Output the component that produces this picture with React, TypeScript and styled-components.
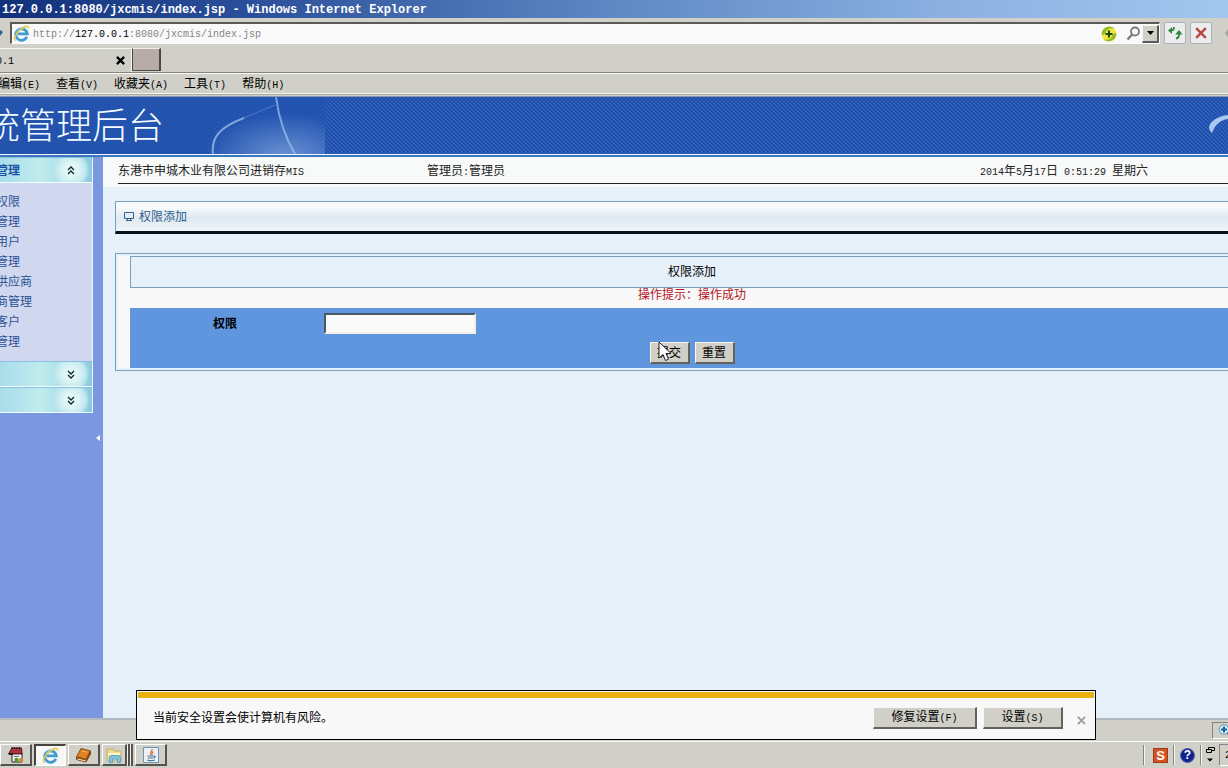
import React from "react";
import styled, { createGlobalStyle } from "styled-components";

const face = "#d1d0c8";
const line = "#7c9fbd";

const GlobalStyle = createGlobalStyle`
  * { box-sizing: border-box; }
  body {
    margin: 0;
    overflow: hidden;
    background: ${face};
    color: #000;
    font: 12px/16px "Liberation Sans", "Noto Sans CJK SC", sans-serif;
  }
  button, input { font: inherit; color: inherit; }
  svg { display: block; flex: none; }
`;

const Screen = styled.div`
  position: relative;
  display: flex;
  flex-direction: column;
  min-height: 100vh;
  overflow: hidden;
`;

/* Half-width characters of the fixed-pitch interface font */
const Latin = styled.span<{ $tone?: string }>`
  font-family: "Liberation Mono", monospace;
  font-size: 10px;
  white-space: pre;
  color: ${(p) => p.$tone ?? "inherit"};
`;

/* ---------- browser chrome ---------- */

const TitleBar = styled.header`
  height: 18px;
  padding-left: 2px;
  background: linear-gradient(90deg, #12307a 0%, #2a4f9a 20%, #5f88c4 50%, #8db2e2 78%, #a3c6ee 100%);
  color: #fff;
  font: bold 12px/20px "Liberation Mono", monospace;
  white-space: nowrap;
`;

const AddressRow = styled.div`
  display: flex;
  align-items: center;
  gap: 4px;
  height: 30px;
  background: ${face};
  overflow: hidden;
`;

const NavTip = styled.div`
  width: 6px;
`;

const AddressField = styled.div`
  flex: 1;
  display: flex;
  align-items: center;
  height: 22px;
  padding-left: 1px;
  border: 1px solid #fff;
  border-top: 2px solid #5c5a58;
  border-left: 2px solid #5c5a58;
  background: #f9f9f9;
`;

const Url = styled.div`
  flex: 1;
  padding-left: 3px;
  line-height: 16px;
`;

const FieldIcons = styled.div`
  display: flex;
  align-items: center;
  gap: 9px;
`;

const DropButton = styled.button`
  display: grid;
  place-items: center;
  width: 17px;
  height: 18px;
  margin-left: -8px;
  padding: 0;
  border: 1px solid #f4f4f0;
  border-right: 2px solid #5c5a58;
  border-bottom: 2px solid #5c5a58;
  background: ${face};
`;

const ToolButton = styled.button`
  display: grid;
  place-items: center;
  width: 22px;
  height: 22px;
  padding: 0;
  border: 1px solid #a9b2bd;
  border-radius: 2px;
  background: #ecedee;
`;

const TabRow = styled.div`
  display: flex;
  height: 25px;
  border-bottom: 1px solid #85847e;
  background: ${face};
`;

const Tab = styled.div`
  display: flex;
  align-items: center;
  justify-content: space-between;
  width: 132px;
  height: 24px;
  padding-right: 6px;
  border-top: 1px solid #f6f6f2;
  border-right: 1px solid #f6f6f2;
`;

const TabLabel = styled.span`
  margin-left: -4px;
`;

const IconButton = styled.button`
  display: grid;
  place-items: center;
  width: 10px;
  height: 10px;
  padding: 0;
  border: 0;
  background: none;
`;

const NewTab = styled.button`
  width: 29px;
  height: 23px;
  border: 1px solid #4a4846;
  border-top-color: #f0eeea;
  border-right-width: 2px;
  background: #b8aca8;
`;

const MenuBar = styled.nav`
  display: flex;
  align-items: center;
  gap: 16px;
  height: 24px;
  margin-left: -2px;
  padding-bottom: 1px;
  border-top: 1px solid #fbfbf8;
  border-bottom: 1px solid #8a98ad;
  background: linear-gradient(${face} 19px, #f4f4f0 19px 20px, #aaa9a4 20px 21px, ${face} 21px);
`;

const MenuButton = styled.button`
  padding: 0;
  border: 0;
  background: none;
  white-space: nowrap;
`;

/* ---------- page ---------- */

const Banner = styled.div`
  display: flex;
  align-items: center;
  justify-content: space-between;
  height: 60px;
  border-bottom: 2px solid #3a77bd;
  box-shadow: inset 0 -1px 0 #f1f8ff;
  background: linear-gradient(45deg, #1e4fae 25%, #2f5fb7 25% 50%, #1e4fae 50% 75%, #2f5fb7 75%) 0 0 / 4px 4px;
`;

const BannerArt = styled.div`
  position: relative;
  width: 325px;
  height: 57px;
  margin-bottom: 1px;
  overflow: hidden;
  background: radial-gradient(ellipse 80px 44px at 285px 60px, #8fb2e5aa, transparent),
    linear-gradient(90deg, #2252abcc 0%, #1d4fae66 100%);
`;

const BannerLines = styled.svg`
  position: absolute;
  right: 0;
  top: 0;
`;

const BannerTitle = styled.h1`
  margin: 0 0 0 -16px;
  color: #f2fbff;
  font: 300 36px/52px "Noto Sans CJK SC", sans-serif;
  white-space: nowrap;
`;

const Body = styled.div`
  flex: 1;
  display: flex;
  overflow: hidden;
`;

const Sidebar = styled.aside`
  display: flex;
  width: 103px;
  flex: none;
  background: #7a97df;
`;

const Groups = styled.div`
  flex: 1;
`;

const GroupHead = styled.button`
  display: flex;
  align-items: center;
  justify-content: space-between;
  width: 100%;
  height: 26px;
  padding: 1px 17px 0 0;
  border: 0;
  border-right: 1px solid #e3fafa;
  border-bottom: 1px solid #f0ffff;
  border-top: 1px solid #8bbde0;
  background: radial-gradient(circle at 71px 12px, #e2f8f4 0 6px, #c4eaf0 14px, transparent 19px),
    linear-gradient(90deg, #a9dcec, #c0ecec 45%, #a4dcea 70%, #8cc8e0);
  color: #1c50a0;
  font-weight: bold;
`;

const GroupName = styled.span`
  margin-left: -4px;
`;

const LinkList = styled.ul`
  margin: 0;
  padding: 9px 0;
  list-style: none;
  border-right: 1px solid #f2f4fc;
  background: #d0d7ef;
`;

const LinkItem = styled.li`
  height: 20px;
  margin-left: -4px;
  line-height: 20px;
`;

const SideLink = styled.a`
  color: #2a5293;
  text-decoration: none;
`;

const Splitter = styled.div`
  display: flex;
  align-items: center;
  justify-content: center;
  width: 10px;
`;

const Main = styled.main`
  flex: 1;
  min-width: 0;
  background: #e6f0f8;
`;

const InfoBar = styled.div`
  height: 30px;
  padding-left: 15px;
  background: #f8f9f9;
`;

const InfoLine = styled.div`
  display: grid;
  grid-template-columns: 309px 1fr 248px;
  height: 27px;
  border-bottom: 1px solid #222;
  line-height: 28px;
  color: #222;
`;

const Heading = styled.h2`
  display: flex;
  align-items: center;
  gap: 5px;
  height: 33px;
  margin: 14px 0 0 12px;
  padding: 1px 0 0 8px;
  border: 1px solid ${line};
  border-right: 0;
  border-bottom: 3px solid #06121f;
  background: linear-gradient(#f5f9fb 0 20%, #dfe9f1 55%, #f0f5f9 100%);
  color: #315f8c;
  font-size: 12px;
  font-weight: normal;
`;

/* The form is wider than the window and runs off its right edge */
const Panel = styled.section`
  margin: 19px -41px 0 12px;
  padding: 2px;
  border: 1px solid ${line};
`;

const PanelInner = styled.div`
  padding: 0 12px;
  background: #f8f8f8;
`;

const PanelTitle = styled.h3`
  height: 32px;
  margin: 0;
  border: 1px solid ${line};
  background: #e6f0f8;
  font-size: 12px;
  font-weight: normal;
  line-height: 30px;
  text-align: center;
`;

const Message = styled.p`
  height: 20px;
  margin: 0;
  color: #b3161c;
  line-height: 14px;
  text-align: center;
`;

const Form = styled.form`
  height: 60px;
  padding-top: 5px;
  background: #6096dd;
`;

const Field = styled.div`
  display: grid;
  grid-template-columns: 190px 1fr;
  align-items: center;
  column-gap: 4px;
`;

const Label = styled.label`
  font-weight: bold;
  text-align: center;
`;

const TextInput = styled.input`
  width: 152px;
  height: 21px;
  padding: 0 4px;
  border: 2px solid #efefe8;
  border-top-color: #4d5866;
  border-left-color: #4d5866;
  background: #f9f9f9;
`;

const Actions = styled.div`
  display: flex;
  justify-content: center;
  gap: 5px;
  margin-top: 8px;
`;

const PushButton = styled.button<{ $width: number }>`
  position: relative;
  width: ${(p) => p.$width}px;
  height: 22px;
  padding: 0;
  border: 1px solid #f7f7f3;
  border-right: 2px solid #65625c;
  border-bottom: 2px solid #65625c;
  background: ${face};
  line-height: 18px;
  white-space: nowrap;
`;

const Pointer = styled.svg`
  position: absolute;
  left: 7px;
  top: -2px;
`;

/* ---------- bottom of the window ---------- */

const StatusBar = styled.footer`
  display: flex;
  justify-content: flex-end;
  height: 23px;
  padding-top: 2px;
  border-top: 2px solid #b3b9be;
  background: ${face};
`;

const ZoomBox = styled.div`
  width: 16px;
  height: 17px;
  padding: 1px 0 0 5px;
  border: 1px solid #85847e;
  border-right: 0;
  border-bottom-color: #fff;
  overflow: hidden;
`;

const Notice = styled.div`
  position: absolute;
  left: 136px;
  right: 132px;
  bottom: 28px;
  height: 50px;
  padding: 1px;
  border: 1px solid #000;
  background: #f8f8f8;
`;

const NoticeStripe = styled.div`
  height: 6px;
  background: #e9b012;
`;

const NoticeBody = styled.div`
  display: flex;
  align-items: center;
  gap: 6px;
  height: 40px;
  padding: 0 8px 0 15px;
`;

const NoticeText = styled.p`
  flex: 1;
  margin: 0;
`;

const NoticeClose = styled(IconButton)`
  margin: 4px 0 0 7px;
`;

const Taskbar = styled.div`
  display: flex;
  align-items: center;
  justify-content: space-between;
  height: 27px;
  border-top: 1px solid #fbfbf8;
  background: ${face};
`;

const Tasks = styled.div`
  display: flex;
  gap: 2px;
`;

const Task = styled.button<{ $active?: boolean }>`
  display: grid;
  place-items: center;
  width: 32px;
  height: 22px;
  padding: 0;
  border: 1px solid #fff;
  border-right: 2px solid #55534f;
  border-bottom: 2px solid #55534f;
  background: ${face};
  ${(p) =>
    p.$active &&
    `border: 2px solid #45433f;
     border-right: 1px solid #fff;
     border-bottom: 1px solid #fff;
     background: #f7f7f7;`}
`;

const Stack = styled.div`
  display: flex;
`;

const StackEdge = styled.span`
  width: 3px;
  height: 22px;
  border-right: 2px solid #55534f;
  background: #f2f2ee;
`;

const StackTask = styled(Task)`
  width: 25px;
`;

const Tray = styled.div`
  display: flex;
  align-items: center;
  height: 22px;
`;

const TrayLine = styled.span<{ $gap: number }>`
  width: 2px;
  height: 20px;
  margin-right: ${(p) => p.$gap}px;
  border-left: 1px solid #85847e;
  border-right: 1px solid #f6f6f2;
`;

const InputBadge = styled.span`
  width: 15px;
  height: 15px;
  margin-right: 5px;
  border: 1px solid #a33a16;
  background: #d4531f;
  color: #fff;
  font: bold 13px/13px "Liberation Sans", sans-serif;
  text-align: center;
`;

const HelpBadge = styled.span`
  width: 15px;
  height: 15px;
  margin-right: 5px;
  border-radius: 50%;
  border: 1px solid #5068b0;
  background: #10238c;
  color: #fff;
  font: bold 12px/13px "Liberation Sans", sans-serif;
  text-align: center;
`;

const Clock = styled.span`
  width: 9px;
  height: 22px;
  margin-left: 3px;
  padding-left: 5px;
  border: 1px solid #85847e;
  border-right: 0;
  border-bottom-color: #fff;
  overflow: hidden;
  line-height: 19px;
`;

/* ---------- drawings ---------- */

const BrowserIcon = () => (
  <svg width="17" height="17" viewBox="0 0 16 16" fill="none">
    <path d="M13 11.200A5.400 5.400 0 1 1 13.400 8.400H4.400" stroke="#3f9bd3" strokeWidth="2.700" />
    <path d="M4 6.500A4.700 4.700 0 0 1 10 3.600" stroke="#9bd7f2" strokeWidth="1" />
    <path d="M2.600 14.600C-.3 14 2.500 7.600 7.500 3.800c3.800-2.900 7.500-3.600 7.300-.5" stroke="#e3c84f" strokeWidth="1.500" />
  </svg>
);

const AddIcon = () => (
  <svg width="16" height="16" viewBox="0 0 16 16">
    <circle cx="8" cy="8" r="7.500" fill="#f1e33c" />
    <path d="M1 9C-.5 2 9-1.500 13.500 2.500 9 1.500 5 3.500 4.500 7.500zM15 7c1.500 7-7.500 10.500-12.500 6.500 5 1 9-1 9-5z" fill="#8dbb2a" />
    <path d="M8 4.500v7M4.500 8h7" stroke="#174b16" strokeWidth="2" />
  </svg>
);

const SearchIcon = () => (
  <svg width="15" height="15" viewBox="0 0 15 15" fill="none" stroke="#77777a" strokeWidth="1.800">
    <circle cx="9" cy="5.500" r="4" />
    <path d="M6.200 8.500L1.500 13.500" strokeWidth="2.200" />
  </svg>
);

const DownTriangle = () => (
  <svg width="7" height="4" viewBox="0 0 7 4">
    <path d="M0 0h7L3.500 4z" fill="#000" />
  </svg>
);

const RefreshIcon = () => (
  <svg width="16" height="14" viewBox="0 0 16 14" fill="none" stroke="#2f8a40" strokeWidth="1.800">
    <path d="M4 4h1.500q1.500 0 1.500-3" />
    <path d="M1 4.500L5 1v7z" fill="#2f8a40" stroke="none" />
    <path d="M12 7v2q0 3-3 3.500" />
    <path d="M8.200 8.500L12 4l3.600 4.500z" fill="#2f8a40" stroke="none" />
  </svg>
);

const Cross = ({ size, color, weight }: { size: number; color: string; weight: number }) => (
  <svg width={size} height={size} viewBox="0 0 10 10">
    <path d="M1 1l8 8M9 1l-8 8" stroke={color} strokeWidth={weight} />
  </svg>
);

const Chevrons = ({ up }: { up?: boolean }) => (
  <svg width="8" height="9" viewBox="0 0 8 9" fill="none" stroke="#123" strokeWidth="1.300">
    <path d={up ? "M1 4l3-3 3 3M1 8l3-3 3 3" : "M1 1l3 3 3-3M1 5l3 3 3-3"} />
  </svg>
);

const MonitorIcon = () => (
  <svg width="10" height="10" viewBox="0 0 10 10" fill="none" stroke="#315f8c">
    <path d="M.5 .5h9v6h-9zM3.500 6.500v2M6.500 6.500v2M2 8.500h6" />
  </svg>
);

const PointerArrow = () => (
  <Pointer width="14" height="21" viewBox="0 0 14 21">
    <path d="M1 1v16l4-3.500 2.500 6 3-1.200L8 12.500h5z" fill="#fff" stroke="#222" />
  </Pointer>
);

const NotebookIcon = () => (
  <svg width="18" height="17" viewBox="0 0 18 17">
    <path d="M5 7h10v9H5z" fill="#f7f4ec" stroke="#222" />
    <path d="M5 2h9.500l.5 6H1.500z" fill="#a8323f" stroke="#45131b" />
    <path d="M5 1v2M7.500 1v2M10 1v2M12.500 1v2" stroke="#222" />
    <path d="M2 8h4" stroke="#222" strokeWidth="2" />
    <circle cx="9.500" cy="14" r="2.200" fill="#4c9a35" />
    <circle cx="14" cy="14" r="2.200" fill="#c98f2c" />
    <path d="M7 10.500h5" stroke="#667" />
  </svg>
);

const BookIcon = () => (
  <svg width="17" height="16" viewBox="0 0 17 16">
    <path d="M6 1.500l9.500 2.500-4.500 8.500L1.500 10z" fill="#d98322" stroke="#8a4a10" />
    <path d="M1.500 10v2.500l9.500 2.500 4.500-8V4L11 12.500z" fill="#a85c14" stroke="#7c430f" />
    <path d="M2.500 12l8.300 2" stroke="#f3e3c0" />
    <path d="M7 4l5 1.300" stroke="#f3b765" />
  </svg>
);

const FolderIcon = () => (
  <svg width="17" height="16" viewBox="0 0 17 16">
    <path d="M1 2h6l1 2h7v10H1z" fill="#ecdc8c" stroke="#c2b068" />
    <path d="M2 6h12v2H2z" fill="#fff6c6" />
    <path d="M3.500 15.500V11q0-2.500 2.500-2.500h6q2.500 0 2.500 2.500v4.500h-3V12h-5v3.500z" fill="#7cc4e4" stroke="#5aa3c6" />
  </svg>
);

const JavaIcon = () => (
  <svg width="16" height="16" viewBox="0 0 16 16" fill="none">
    <path d="M.5 .5h15v15H.5z" fill="#edf1f4" stroke="#6e92b3" />
    <path d="M9 2c1 2-3 3-1 6M10.500 4.500C8 6 9.500 6.500 9 8" stroke="#dc6a2c" strokeWidth="1.200" />
    <path d="M4.500 9h6.500M5 11h5.500M11 9q2.500 0 0 2M4 13q4 1.200 8 0" stroke="#45759c" strokeWidth="1.200" />
  </svg>
);

const ZoomIcon = () => (
  <svg width="16" height="14" viewBox="0 0 16 14">
    <circle cx="6" cy="5.500" r="4.800" fill="#d9edf8" stroke="#5c95bd" />
    <path d="M6 2.500v6M3 5.500h6" stroke="#1763a0" strokeWidth="2" />
    <path d="M9.500 9l4 4" stroke="#80624a" strokeWidth="2" />
  </svg>
);

const RestoreIcon = () => (
  <svg width="11" height="18" viewBox="0 0 11 18">
    <path d="M3.500 4V1.500h6v3H7M1.500 3.500h5v3h-5z" fill="none" stroke="#000" />
    <path d="M2 12.500h6l-3 3z" fill="#000" />
  </svg>
);

const menus = [
  ["编辑", "(E)"],
  ["查看", "(V)"],
  ["收藏夹", "(A)"],
  ["工具", "(T)"],
  ["帮助", "(H)"],
];

const links = ["权限", "管理", "用户", "管理", "供应商", "商管理", "客户", "管理"];

export default function App() {
  return (
    <Screen>
      <GlobalStyle />
      <TitleBar>127.0.0.1:8080/jxcmis/index.jsp - Windows Internet Explorer</TitleBar>
      <AddressRow>
        <NavTip>
          <svg width="4" height="8" viewBox="0 0 4 8">
            <path d="M0 1l3 2-3 4z" fill="#2c5f98" />
          </svg>
        </NavTip>
        <AddressField>
          <BrowserIcon />
          <Url>
            <Latin $tone="#858585">http://</Latin>
            <Latin>127.0.0.1</Latin>
            <Latin $tone="#858585">:8080/jxcmis/index.jsp</Latin>
          </Url>
          <FieldIcons>
            <AddIcon />
            <SearchIcon />
            <DropButton aria-label="搜索选项">
              <DownTriangle />
            </DropButton>
          </FieldIcons>
        </AddressField>
        <ToolButton aria-label="刷新">
          <RefreshIcon />
        </ToolButton>
        <ToolButton aria-label="停止">
          <Cross size={12} color="#b5483f" weight={2} />
        </ToolButton>
        <svg width="12" height="10" viewBox="0 0 12 10">
          <path d="M12 1L9 5l3 4z" fill="#a5a5a2" />
        </svg>
      </AddressRow>
      <TabRow>
        <Tab>
          <TabLabel>
            <Latin>0.1</Latin>
          </TabLabel>
          <IconButton aria-label="关闭选项卡">
            <Cross size={9} color="#000" weight={2.5} />
          </IconButton>
        </Tab>
        <NewTab aria-label="新选项卡" />
      </TabRow>
      <MenuBar>
        {menus.map(([name, key]) => (
          <MenuButton key={name}>
            {name}
            <Latin>{key}</Latin>
          </MenuButton>
        ))}
      </MenuBar>

      <Banner>
        <BannerArt>
          <BannerTitle>统管理后台</BannerTitle>
          <BannerLines width="125" height="57" viewBox="0 0 125 57" fill="none">
            <path d="M13 57C11 40 20 30 44 21" stroke="#a9c6f0" strokeWidth="2" strokeOpacity=".7" />
            <path d="M44 21C54 17 64 12 75 8" stroke="#8fb2e6" strokeWidth="1" strokeOpacity=".4" />
            <path d="M76 0C79 22 86 42 95 57" stroke="#9fc0ee" strokeWidth="2" strokeOpacity=".7" />
          </BannerLines>
        </BannerArt>
        <svg width="20" height="24" viewBox="0 0 20 24">
          <path d="M1 13C3 6 11 2 20 1v4C12 6 7 11 4 19 2 17 1 15 1 13z" fill="#a9c8f2" />
        </svg>
      </Banner>

      <Body>
        <Sidebar>
          <Groups>
            <GroupHead>
              <GroupName>管理</GroupName>
              <Chevrons up />
            </GroupHead>
            <LinkList>
              {links.map((text, i) => (
                <LinkItem key={i}>
                  <SideLink href="#">{text}</SideLink>
                </LinkItem>
              ))}
            </LinkList>
            <GroupHead aria-label="展开">
              <GroupName />
              <Chevrons />
            </GroupHead>
            <GroupHead aria-label="展开">
              <GroupName />
              <Chevrons />
            </GroupHead>
          </Groups>
          <Splitter>
            <svg width="4" height="6" viewBox="0 0 4 6">
              <path d="M4 0v6L0 3z" fill="#fff" />
            </svg>
          </Splitter>
        </Sidebar>
        <Main>
          <InfoBar>
            <InfoLine>
              <span>
                东港市申城木业有限公司进销存<Latin>MIS</Latin>
              </span>
              <span>
                管理员<Latin>:</Latin>管理员
              </span>
              <span>
                <Latin>2014</Latin>年<Latin>5</Latin>月<Latin>17</Latin>日<Latin>{" 0:51:29 "}</Latin>星期六
              </span>
            </InfoLine>
          </InfoBar>
          <Heading>
            <MonitorIcon />
            权限添加
          </Heading>
          <Panel>
            <PanelInner>
              <PanelTitle>权限添加</PanelTitle>
              <Message>操作提示：操作成功</Message>
              <Form onSubmit={(e) => e.preventDefault()}>
                <Field>
                  <Label htmlFor="permission">权限</Label>
                  <TextInput id="permission" type="text" />
                </Field>
                <Actions>
                  <PushButton type="submit" $width={40}>
                    提交
                    <PointerArrow />
                  </PushButton>
                  <PushButton type="reset" $width={40}>
                    重置
                  </PushButton>
                </Actions>
              </Form>
            </PanelInner>
          </Panel>
        </Main>
      </Body>

      <StatusBar>
        <ZoomBox>
          <ZoomIcon />
        </ZoomBox>
      </StatusBar>
      <Taskbar>
        <Tasks>
          <Task aria-label="笔记">
            <NotebookIcon />
          </Task>
          <Task $active aria-label="浏览器">
            <BrowserIcon />
          </Task>
          <Task aria-label="词典">
            <BookIcon />
          </Task>
          <Stack>
            <StackTask aria-label="文件夹">
              <FolderIcon />
            </StackTask>
            <StackEdge />
            <StackEdge />
          </Stack>
          <Task aria-label="Java">
            <JavaIcon />
          </Task>
        </Tasks>
        <Tray>
          <TrayLine $gap={8} />
          <InputBadge>S</InputBadge>
          <TrayLine $gap={5} />
          <HelpBadge>?</HelpBadge>
          <TrayLine $gap={3} />
          <RestoreIcon />
          <Clock>
            <Latin>2</Latin>
          </Clock>
        </Tray>
      </Taskbar>

      <Notice role="alert">
        <NoticeStripe />
        <NoticeBody>
          <NoticeText>当前安全设置会使计算机有风险。</NoticeText>
          <PushButton $width={104}>
            修复设置<Latin>(F)</Latin>
          </PushButton>
          <PushButton $width={80}>
            设置<Latin>(S)</Latin>
          </PushButton>
          <NoticeClose aria-label="关闭">
            <Cross size={9} color="#9c9c9c" weight={2} />
          </NoticeClose>
        </NoticeBody>
      </Notice>
    </Screen>
  );
}
